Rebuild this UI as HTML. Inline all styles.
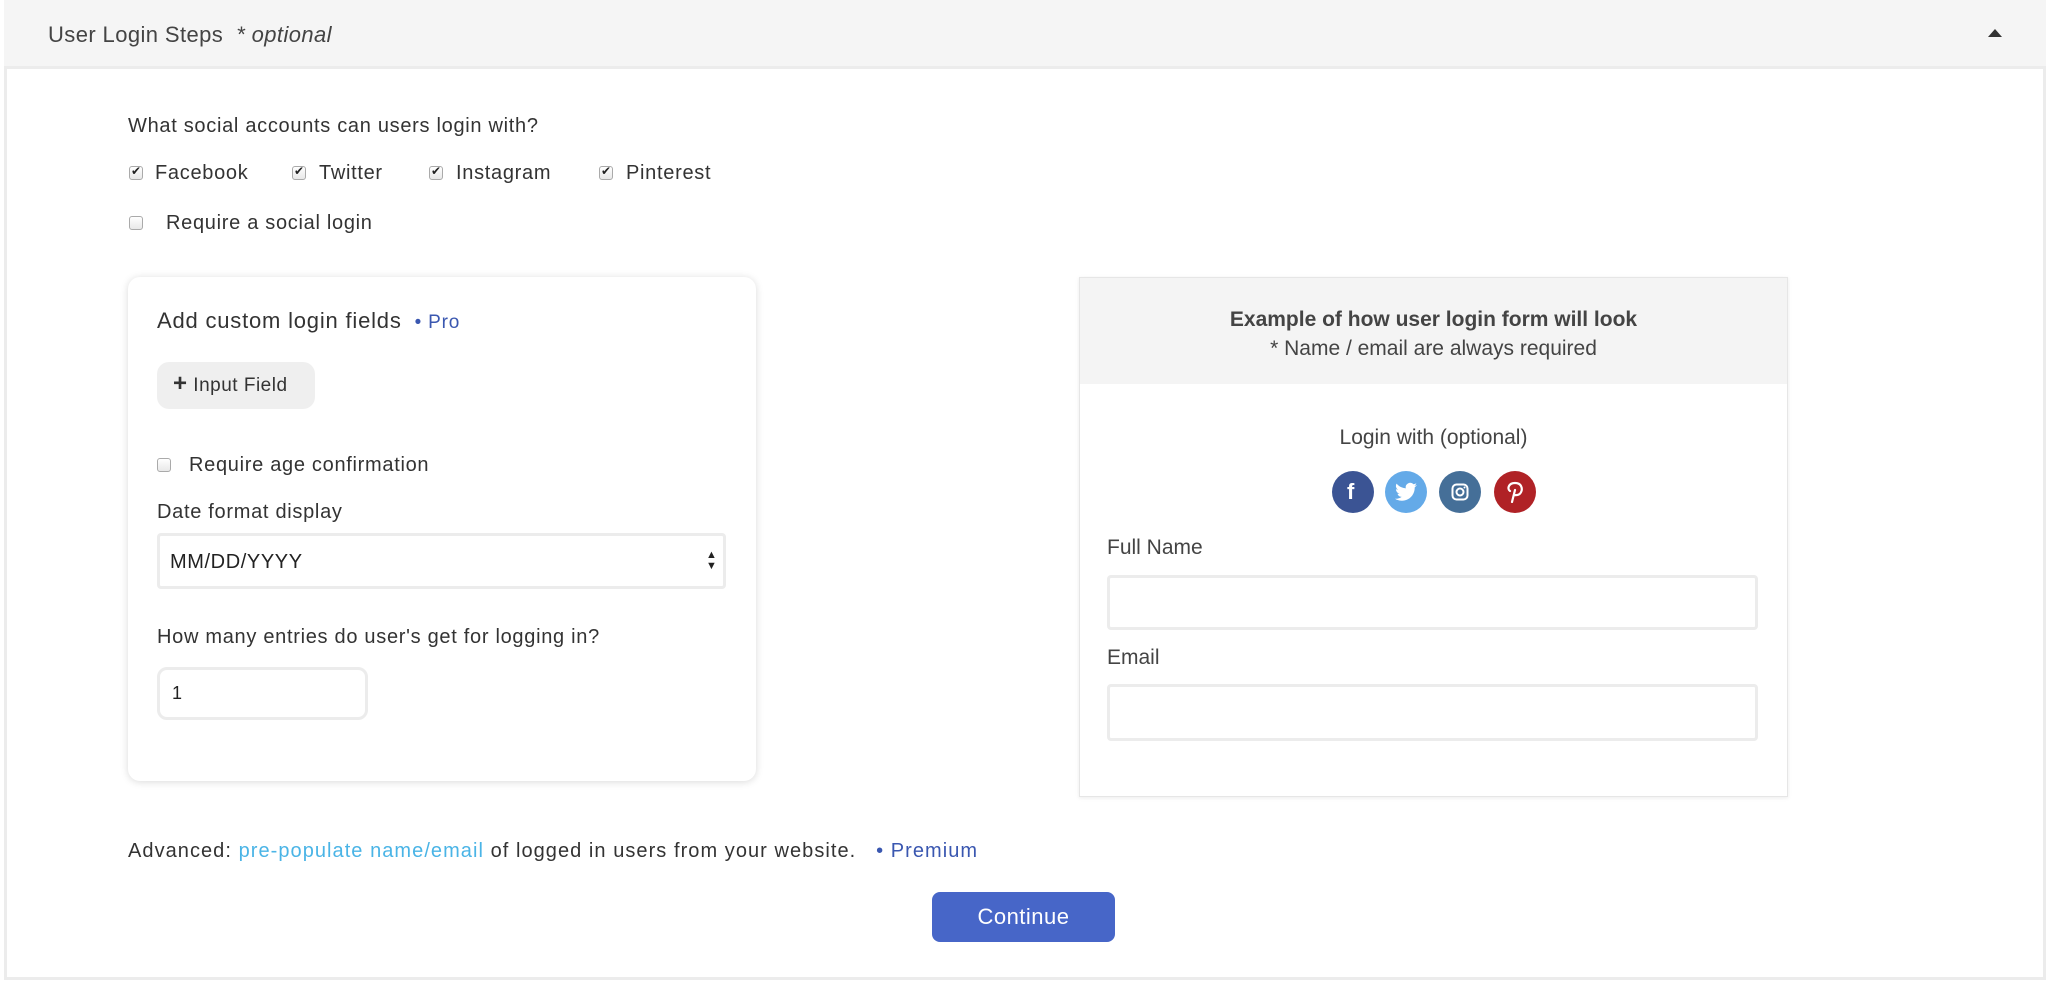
<!DOCTYPE html>
<html><head><meta charset="utf-8"><style>
*{box-sizing:border-box;margin:0;padding:0}
body{width:2048px;height:984px;background:#fff;font-family:"Liberation Sans",sans-serif;color:#333;position:relative;overflow:hidden}
.a{position:absolute;white-space:nowrap}
.cb{position:absolute;width:14px;height:14px;border:1px solid #aaa;border-radius:3px;background:linear-gradient(#fff,#e8e8e8)}
.cb.on::after{content:"✔";position:absolute;left:1px;top:-3px;font-size:12px;color:#222}
.t{font-size:20px;color:#333;letter-spacing:0.7px}
.inp{position:absolute;border:3px solid #ececec;border-radius:4px;background:#fff}
.ic{position:absolute;width:42px;height:42px;border-radius:50%;top:471px}
.r{font-size:21px;color:#444}
</style></head><body>
<div class="a" style="left:4px;top:0;width:2042px;height:980px;border:3px solid #ececec;border-top:none"></div>
<div class="a" style="left:4px;top:0;width:2042px;height:69px;background:#f5f5f5;border-bottom:3px solid #ececec"></div>
<div class="a" style="left:48px;top:22px;font-size:22px;color:#444;letter-spacing:0.4px">User Login Steps&nbsp; <i>* optional</i></div>
<div class="a" style="left:1988px;top:29px;width:0;height:0;border-left:7px solid transparent;border-right:7px solid transparent;border-bottom:8px solid #333"></div>

<div class="a t" style="left:128px;top:115px">What social accounts can users login with?</div>
<div class="cb on" style="left:129px;top:166px"></div><div class="a t" style="left:155px;top:162px">Facebook</div>
<div class="cb on" style="left:292px;top:166px"></div><div class="a t" style="left:319px;top:162px">Twitter</div>
<div class="cb on" style="left:429px;top:166px"></div><div class="a t" style="left:456px;top:162px">Instagram</div>
<div class="cb on" style="left:599px;top:166px"></div><div class="a t" style="left:626px;top:162px">Pinterest</div>
<div class="cb" style="left:129px;top:216px"></div><div class="a t" style="left:166px;top:212px">Require a social login</div>

<div class="a" style="left:128px;top:277px;width:628px;height:504px;border-radius:12px;box-shadow:0 1px 8px rgba(0,0,0,.15);background:#fff"></div>
<div class="a" style="left:157px;top:308px;font-size:22px;color:#333;letter-spacing:0.8px">Add custom login fields <span style="font-size:19px;color:#3a57b0">&nbsp;• Pro</span></div>
<div class="a" style="left:157px;top:362px;width:158px;height:47px;background:#efefef;border-radius:12px"></div>
<div class="a" style="left:173px;top:374px;font-size:19px;color:#333;letter-spacing:0.5px"><b style="font-size:24px;line-height:20px">+</b> Input Field</div>
<div class="cb" style="left:157px;top:458px"></div><div class="a t" style="left:189px;top:454px">Require age confirmation</div>
<div class="a t" style="left:157px;top:501px">Date format display</div>
<div class="inp" style="left:157px;top:533px;width:569px;height:56px"></div>
<div class="a" style="left:170px;top:551px;font-size:20px;color:#222;letter-spacing:0.6px">MM/DD/YYYY</div>
<div class="a" style="left:706px;top:550px;font-size:11px;line-height:11px;color:#222">▲<br>▼</div>
<div class="a t" style="left:157px;top:626px">How many entries do user's get for logging in?</div>
<div class="inp" style="left:157px;top:667px;width:211px;height:53px;border-radius:10px"></div>
<div class="a" style="left:172px;top:683px;font-size:18px;color:#222">1</div>

<div class="a" style="left:1079px;top:277px;width:709px;height:520px;border:1px solid #e6e6e6;box-shadow:0 1px 4px rgba(0,0,0,.08);background:#fff"></div>
<div class="a" style="left:1080px;top:278px;width:707px;height:106px;background:#f4f4f4"></div>
<div class="a r" style="left:1079px;top:308px;width:709px;text-align:center;font-weight:bold">Example of how user login form will look</div>
<div class="a r" style="left:1079px;top:337px;width:709px;text-align:center">* Name / email are always required</div>
<div class="a r" style="left:1079px;top:426px;width:709px;text-align:center">Login with (optional)</div>
<div class="ic" style="left:1332px;background:#3b5494"></div>
<div class="a" style="left:1347px;top:479px;font-size:22px;font-weight:bold;color:#fff">f</div>
<div class="ic" style="left:1385px;background:#64aae8"></div>
<svg class="a" style="left:1395px;top:482px" width="22" height="20" viewBox="0 0 24 20"><path fill="#fff" d="M24 2.4a10 10 0 0 1-2.8.8A5 5 0 0 0 23.3.4a10 10 0 0 1-3.1 1.2A4.9 4.9 0 0 0 11.8 6 14 14 0 0 1 1.7.9a4.9 4.9 0 0 0 1.5 6.6A4.9 4.9 0 0 1 1 6.9a4.9 4.9 0 0 0 3.9 4.9 5 5 0 0 1-2.2.1 4.9 4.9 0 0 0 4.6 3.4A9.9 9.9 0 0 1 0 17.3 14 14 0 0 0 7.5 19.5c9.1 0 14-7.5 14-14v-.6A10 10 0 0 0 24 2.4z"/></svg>
<div class="ic" style="left:1439px;background:#456f98"></div>
<svg class="a" style="left:1451px;top:483px" width="18" height="18" viewBox="0 0 18 18"><rect x="1.5" y="1.5" width="15" height="15" rx="4" fill="none" stroke="#fff" stroke-width="2"/><circle cx="9" cy="9" r="3.5" fill="none" stroke="#fff" stroke-width="2"/><circle cx="13.5" cy="4.5" r="1" fill="#fff"/></svg>
<div class="ic" style="left:1494px;background:#b02226"></div>
<svg class="a" style="left:1506px;top:481px" width="18" height="22" viewBox="0 0 18 22"><path d="M6 21 L9 9 M8.5 14 C15 15 17 9 15 5 C13 1 5 1 3 5 C2 7 2.5 9 4 10" fill="none" stroke="#fff" stroke-width="2.2" stroke-linecap="round"/></svg>
<div class="a" style="left:1107px;top:536px;font-size:21px;color:#444">Full Name</div>
<div class="inp" style="left:1107px;top:575px;width:651px;height:55px"></div>
<div class="a" style="left:1107px;top:646px;font-size:21px;color:#444">Email</div>
<div class="inp" style="left:1107px;top:684px;width:651px;height:57px"></div>

<div class="a" style="left:128px;top:840px;font-size:20px;color:#333;letter-spacing:1.05px">Advanced: <span style="color:#4ab4e6">pre-populate name/email</span> of logged in users from your website. &nbsp; <span style="color:#3a57b0">• Premium</span></div>
<div class="a" style="left:932px;top:892px;width:183px;height:50px;background:#4766c8;border-radius:8px;color:#fff;font-size:22px;text-align:center;line-height:50px;letter-spacing:0.5px">Continue</div>
</body></html>
